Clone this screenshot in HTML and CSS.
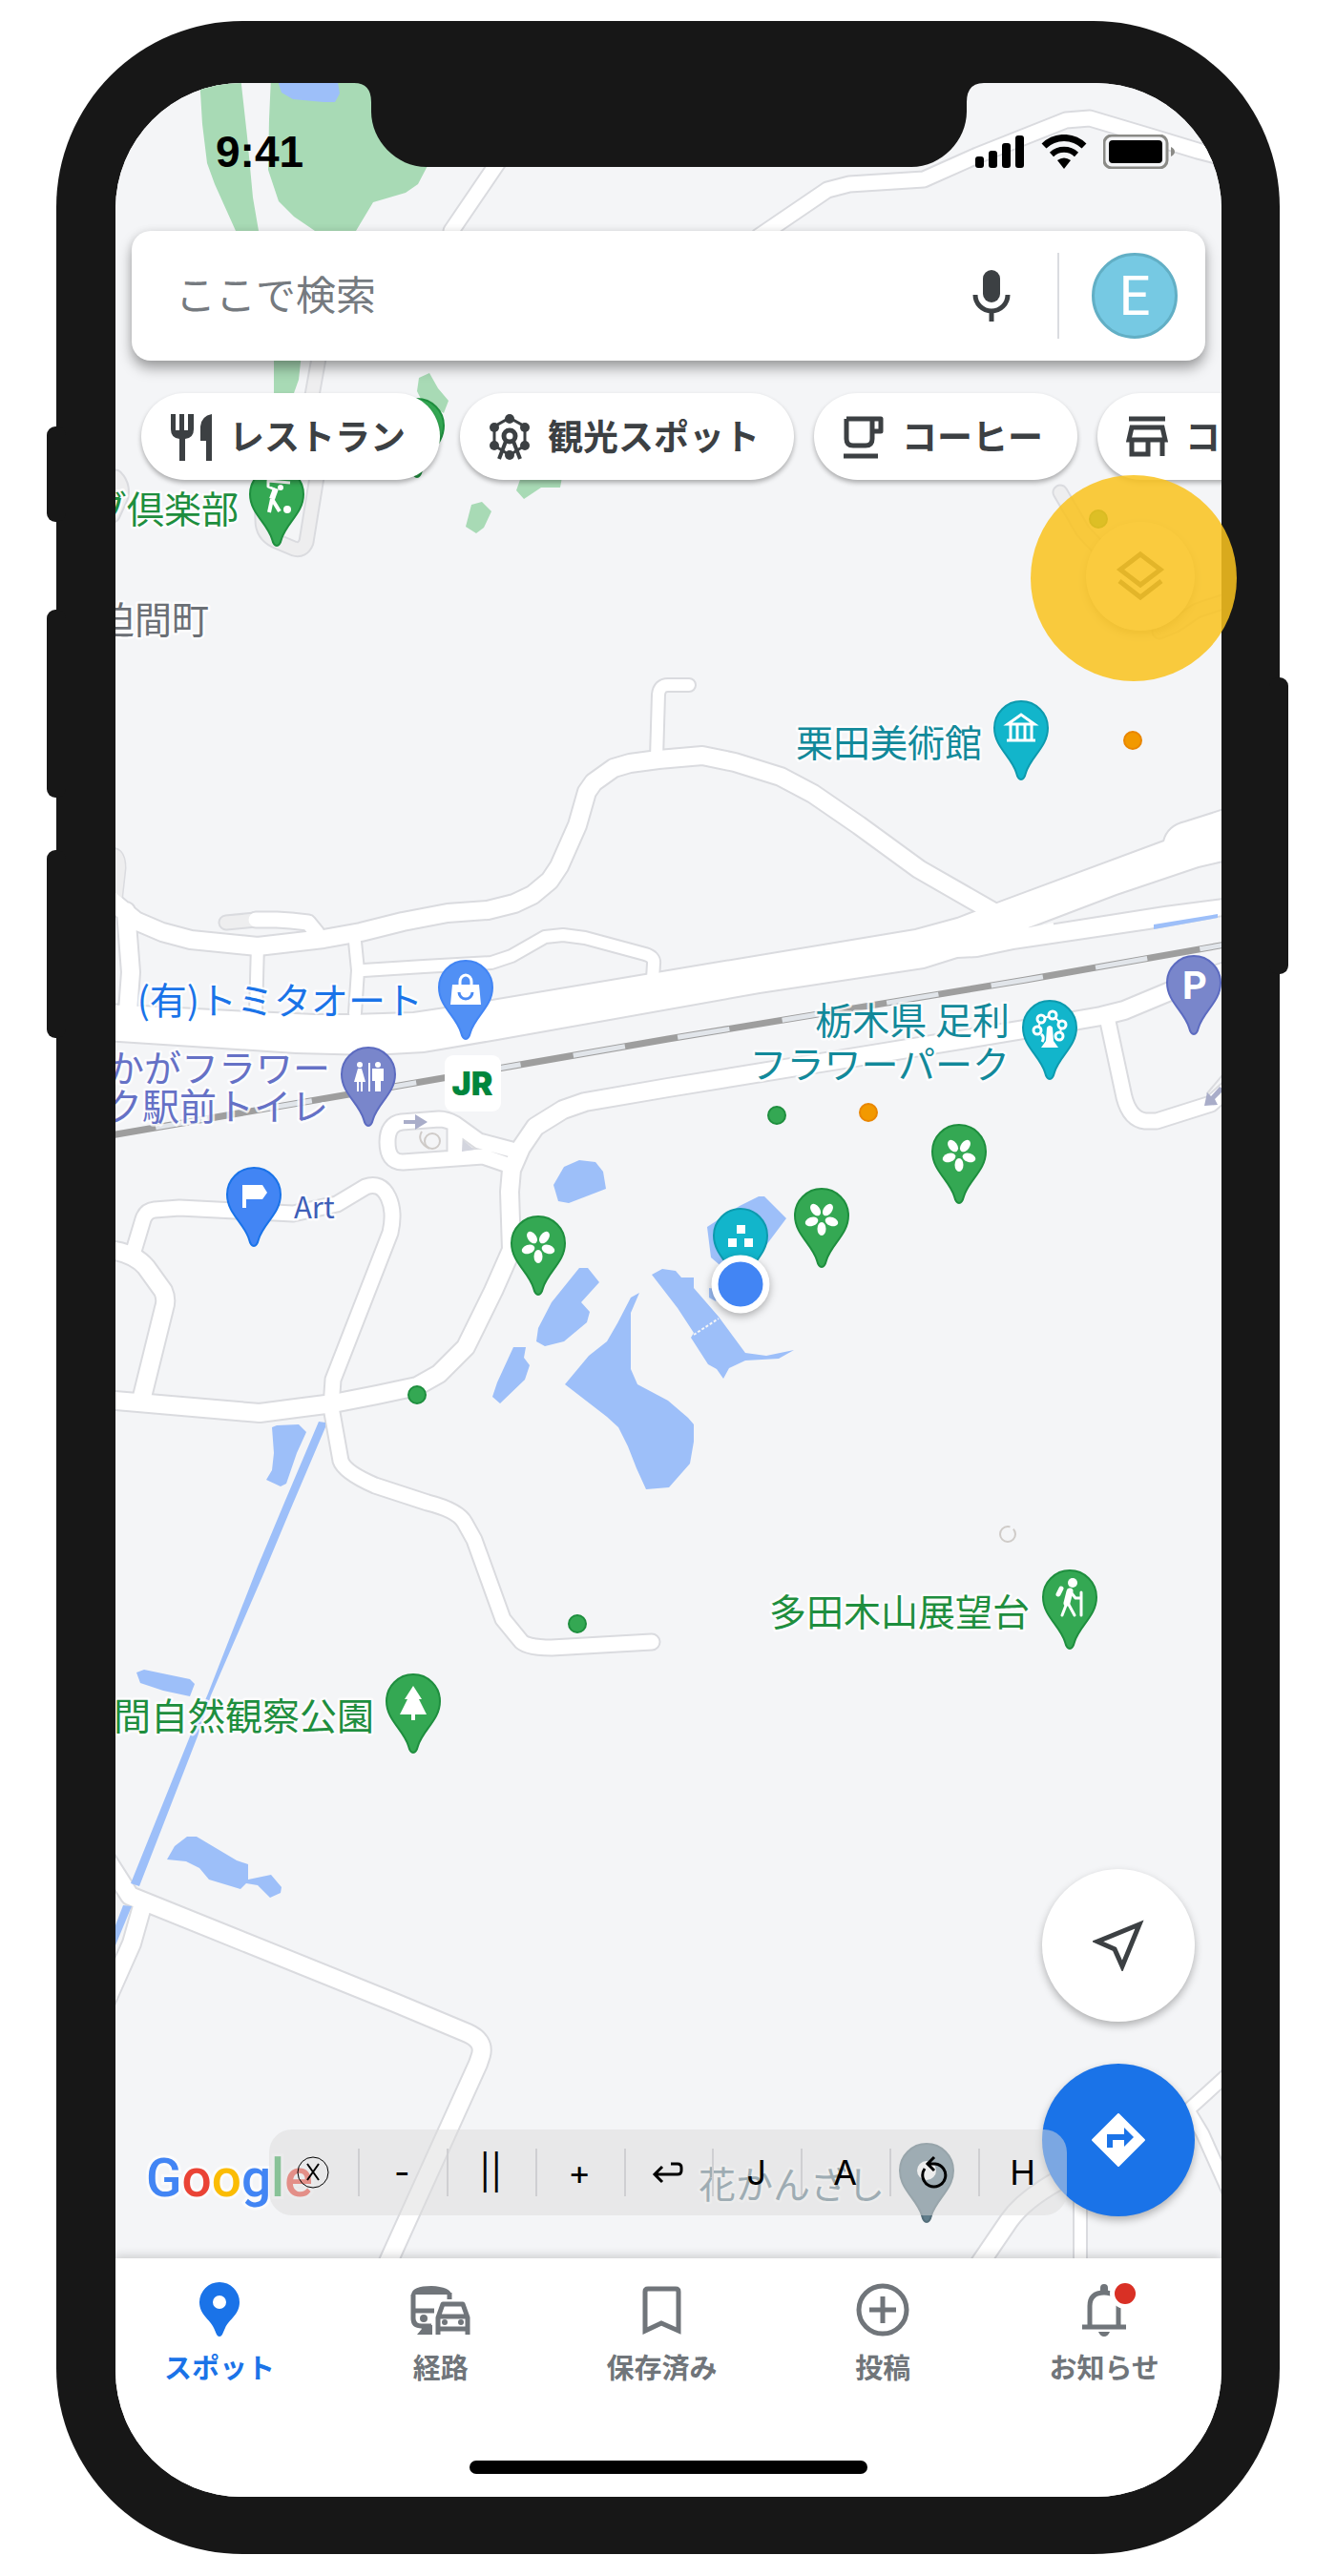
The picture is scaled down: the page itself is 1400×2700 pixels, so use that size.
FILE: index.html
```html
<!DOCTYPE html>
<html lang="ja">
<head>
<meta charset="utf-8">
<meta name="viewport" content="width=device-width, initial-scale=1">
<title>マップ</title>
<link rel="stylesheet" href="styles.css">
</head>
<body>
<div class="phone">
  <span class="side-key key-mute"></span>
  <span class="side-key key-up"></span>
  <span class="side-key key-down"></span>
  <span class="side-key key-power"></span>

  <div class="screen">
    <main class="map-area">
      <svg class="map" viewBox="121 87 1159 2280" role="img" aria-label="地図">
        <defs>
          <path id="pin" d="M0 0C-3 0-4-3-5-7C-10-24-28-34-28-54A28 28 0 1 1 28-54C28-34 10-24 5-7C4-3 3 0 0 0Z"/>
          <g id="flower" fill="#fff">
            <ellipse cx="0" cy="11" rx="4.5" ry="7"/>
            <ellipse cx="0" cy="11" rx="4.5" ry="7" transform="rotate(72)"/>
            <ellipse cx="0" cy="11" rx="4.5" ry="7" transform="rotate(144)"/>
            <ellipse cx="0" cy="11" rx="4.5" ry="7" transform="rotate(216)"/>
            <ellipse cx="0" cy="11" rx="4.5" ry="7" transform="rotate(288)"/>
          </g>
          <path id="trunk" d="M110 1053L242 1060 330 1064 368 1064 433 1062 480 1055 700 1018 959 975 1003 963 1050 945 1220 882Q1224 866 1242 862L1292 846V957L1204 973 1062 994 1024 1002 1003 1003 968 1014 796 1040 521 1089 444 1102 390 1105 310 1103 110 1090Z"/>
          <path id="alley" d="M335 370L326 420 332 500 321 568Q317 578 308 575L289 567Q275 560 275 545L274 520M1111 516L1135 557 1151 574M1215 662L1232 655 1254 640 1290 628M121 500Q129 508 127 520L118 540M237 967L268 964"/>
          <path id="r12" d="M688 795L690 728Q691 718 700 718H722M268 1062L270 990M372 987L375 1017 372 1062M381 1017L444 1013 515 1009 536 1002 571 982 590 980 613 983 676 1000Q686 1003 685 1010L684 1026M1132 2375V2300M1290 2171L1247 2210M1248 2216L1260 2236 1290 2303"/>
          <path id="r14" d="M795 248L867 199 890 193 968 188 1024 163 1117 126 1142 124 1209 144 1255 158 1290 167M522 170L473 242M268 964H290L305 965 323 967 332 978M540 1206L502 1196 477 1178Q468 1173 460 1173L421 1176Q406 1178 406 1197Q406 1218 422 1218L506 1212 538 1223M477 1180V1210M138 1318L150 1278Q153 1269 162 1268L188 1266 307 1272 353 1262 383 1244Q399 1238 407 1255Q414 1270 409 1292L349 1446 347 1475 357 1531Q361 1543 393 1557L448 1575Q480 1583 487 1596L497 1614 527 1697 545 1719Q550 1727 578 1727L683 1721M1160 1066L1178 1150Q1184 1173 1200 1175H1212L1269 1157 1290 1138"/>
          <path id="r17" d="M112 940L142 965 170 977 200 985 270 992 339 984 378 977 422 966 469 957 511 954 539 947 558 938 576 923 586 908 605 865 615 830 622 820 643 805 660 800 690 796 736 792 770 799 818 814 852 832 900 865 963 911 1045 958M132 955L137 1019 134 1060M1290 1016L1226 1039 1178 1059 1154 1065 1067 1080 878 1111 700 1140 613 1155 590 1163 561 1181 546 1203 536 1226 534 1249 536 1310 517 1353 488 1412 460 1440 437 1453 395 1462 349 1471 310 1476 272 1481 110 1467M110 1311H121Q142 1315 153 1328L171 1353Q175 1362 172 1371L148 1468M106 1940L136 1987 416 2100 490 2131Q508 2139 504 2154L501 2163 405 2375M149 1998L138 2037 110 2100M1025 2375L1057 2328Q1072 2306 1110 2285"/>
        </defs>

        <rect x="100" y="60" width="1200" height="2330" fill="#f4f5f7"/>

        <!-- woods -->
        <g fill="#a8dab5">
          <path d="M209 80H252L259 143 265 207 271 242H247L225 193 217 171 212 130Z"/>
          <path d="M284 80L282 125 281 178 292 211 308 227 330 242H373L391 212 425 202 438 193 450 170 420 80Z"/>
          <path d="M287 370H316L313 398 308 412H287Z"/>
          <path d="M439 396L450 391 459 407 470 420 465 433 442 420 437 410Z"/>
          <path d="M546 500H589L587 511H567L549 523 541 514Z"/>
          <path d="M494 529L505 526 515 536 507 553 499 559 488 552Z"/>
        </g>

        <!-- road edges -->
        <g fill="none" stroke="#dadbdf" stroke-linecap="round" stroke-linejoin="round">
          <path d="M112 890Q131 886 131 910L127 946 112 955Z" stroke-width="3"/>
          <use href="#alley" stroke-width="17"/>
          <use href="#r12" stroke-width="16"/>
          <use href="#r14" stroke-width="19"/>
          <use href="#r17" stroke-width="22"/>
          <use href="#trunk" stroke-width="4"/>
          <path d="M1265 1146L1285 1122" stroke-width="2"/>
        </g>
        <!-- road surfaces -->
        <g fill="none" stroke="#fff" stroke-linecap="round" stroke-linejoin="round">
          <path d="M112 890Q131 886 131 910L127 946 112 955Z" fill="#eeeeef" stroke="none"/>
          <use href="#alley" stroke="#eeeeef" stroke-width="13"/>
          <use href="#r12" stroke-width="12"/>
          <use href="#r14" stroke-width="15"/>
          <use href="#r17" stroke-width="18"/>
          <use href="#trunk" fill="#fff" stroke="none"/>
        </g>
        <path d="M1078 973L1170 938 1256 909 1290 901V941L1220 950 1106 968Z" fill="#f4f5f7" stroke="#dadbdf" stroke-width="2"/>
        <path d="M1070 976L1104 969" stroke="#fff" stroke-width="4"/>

        <!-- railway -->
        <path d="M110 1191L418 1138 700 1089 1075 1027 1290 989" fill="none" stroke="#9e9e9e" stroke-width="7"/>
        <path d="M110 1191L418 1138 700 1089 1075 1027 1290 989" fill="none" stroke="#e1e5ea" stroke-width="5" stroke-dasharray="55 56" stroke-dashoffset="-54"/>

        <!-- water -->
        <g fill="#9dbff9">
          <path d="M292 80L292 88 295 97 307 104 339 107H351L356 98 353 80Z"/>
          <path d="M334 1490L341 1491V1496L304 1583 276 1650 221 1777 207 1820 146 1977 137 1974 199 1820 218 1775 270 1642 298 1575Z"/>
          <path d="M129 1997L138 1998 121 2039V2018Z"/>
          <path d="M285 1496L290 1494 313 1493 321 1501 311 1523 300 1555 294 1558 279 1551 285 1541 287 1523Z"/>
          <path d="M143 1753L151 1750 199 1760 204 1765 199 1778 171 1772 147 1764Z"/>
          <path d="M175 1949L183 1935 196 1925H206L248 1950 260 1954V1970L284 1965 295 1978 294 1984 283 1989 270 1976 258 1974 252 1980 219 1970 209 1958 195 1951Z"/>
          <path d="M580 1242L591 1223 607 1216 624 1218 632 1228 635 1246 596 1261 585 1259Z"/>
          <path d="M607 1329H616L628 1344 609 1365 618 1375 615 1386 591 1406 571 1411 562 1406 564 1392 578 1365Z"/>
          <path d="M538 1412H551L549 1423 555 1431 550 1446 524 1471 516 1464 521 1449Z"/>
          <path d="M670 1355L661 1376V1435L668 1451 700 1468 721 1486 727 1493V1511L723 1534 701 1559 677 1561 667 1539 658 1516 648 1496 636 1485 592 1451 617 1421 636 1406 647 1387 661 1360Z"/>
          <path d="M683 1336L694 1330 708 1332 714 1339H727V1350L753 1380 781 1418 803 1421 832 1415 816 1424 781 1426 764 1434 758 1445 751 1435 742 1430 724 1402 727 1397 710 1371Z"/>
          <path d="M741 1286L775 1264 795 1254H801L824 1277 791 1321 759 1330 745 1318ZM743 1350L756 1352 750 1364 743 1360Z"/>
          <path d="M1209 969L1276 958V962L1209 974Z"/>
        </g>
        <path d="M727 1399L753 1382" stroke="#f4f5f7" stroke-width="2" stroke-dasharray="3 2"/>

        <!-- ground details -->
        <g fill="none" stroke="#cfcbc8" stroke-width="2">
          <circle cx="453" cy="1196" r="8"/>
          <path d="M442 1186Q436 1196 450 1204"/>
          <circle cx="1056" cy="1608" r="8" stroke-dasharray="40 4"/>
        </g>
        <g fill="#a9adc9">
          <path d="M423 1174H435V1168L448 1176 435 1184V1178H423Z"/>
          <path d="M485 1195L497 1205 484 1207Z" fill="#d3d5de"/>
          <path d="M1278 1139L1283 1142 1273 1152 1276 1158 1262 1159 1265 1145 1269 1149Z"/>
        </g>

        <!-- small places -->
        <g stroke-width="2">
          <g fill="#34a853" stroke="#1e8e3e">
            <circle cx="1151" cy="544" r="9"/><circle cx="814" cy="1169" r="9"/><circle cx="437" cy="1462" r="9"/><circle cx="605" cy="1702" r="9"/>
          </g>
          <g fill="#f29900" stroke="#e98600">
            <circle cx="1187" cy="776" r="9"/><circle cx="910" cy="1166" r="9"/>
          </g>
        </g>

        <!-- pins -->
        <g stroke-width="2">
          <g transform="translate(437 500)"><use href="#pin" fill="#34a853" stroke="#1e8e3e"/></g>
          <g transform="translate(290 572)">
            <use href="#pin" fill="#34a853" stroke="#1e8e3e"/>
            <g fill="none" stroke="#fff" stroke-width="3" stroke-linejoin="round">
              <path d="M14-66L-9-68V-62L0-58"/>
              <path d="M-1-60L-5-49" stroke-width="6"/>
              <path d="M-5-49L3-36M-5-49L-8-35" stroke-width="4"/>
            </g>
            <circle cx="4" cy="-61" r="3" fill="#fff"/><circle cx="11" cy="-38" r="4" fill="#fff"/>
          </g>
          <g transform="translate(1070 817)">
            <use href="#pin" fill="#12b5cb" stroke="#0d9aae"/>
            <path d="M-14-58L0-68 14-58ZM-15-41H15M-11-57V-42M-4-57V-42M4-57V-42M11-57V-42" fill="none" stroke="#fff" stroke-width="3"/>
          </g>
          <g transform="translate(488 1089)">
            <use href="#pin" fill="#5190f5" stroke="#4285f4"/>
            <path d="M-14-57H14L16-36H-16Z" fill="#fff"/>
            <path d="M-6-56V-60A6 7 0 0 1 6-60V-56" fill="none" stroke="#fff" stroke-width="3"/>
            <path d="M-7-49A7 7 0 0 0 7-49" fill="none" stroke="#4a8af4" stroke-width="3"/>
          </g>
          <g transform="translate(386 1180)">
            <use href="#pin" fill="#7986cb" stroke="#5c6bc0"/>
            <g fill="#fff">
              <circle cx="-9" cy="-64" r="3"/><path d="M-11-60H-7L-3-46H-6V-36H-8V-46H-10V-36H-12V-46H-15Z"/>
              <circle cx="10" cy="-64" r="3"/><path d="M4-60H16V-47H13V-36H7V-47H4Z"/>
              <path d="M0-66H2V-36H0Z"/>
            </g>
          </g>
          <g transform="translate(266 1306)">
            <use href="#pin" fill="#4285f4" stroke="#1a73e8"/>
            <path d="M-12-64H9L14-56 9-49H-8V-40H-12Z" fill="#fff"/>
          </g>
          <g transform="translate(564 1357)"><use href="#pin" fill="#34a853" stroke="#1e8e3e"/><use href="#flower" y="-51"/></g>
          <g transform="translate(861 1328)"><use href="#pin" fill="#34a853" stroke="#1e8e3e"/><use href="#flower" y="-51"/></g>
          <g transform="translate(1005 1261)"><use href="#pin" fill="#34a853" stroke="#1e8e3e"/><use href="#flower" y="-51"/></g>
          <g transform="translate(1100 1131)">
            <use href="#pin" fill="#12b5cb" stroke="#0d9aae"/>
            <g fill="none" stroke="#fff" stroke-width="3">
              <path d="M-13-51L-9-63 3-67 13-57 10-45" stroke-width="2"/>
              <g fill="#12b5cb"><circle cx="-13" cy="-51" r="4"/><circle cx="-9" cy="-63" r="4"/><circle cx="3" cy="-67" r="4"/><circle cx="13" cy="-57" r="4"/><circle cx="10" cy="-45" r="4"/></g>
              <path d="M-9-47Q-5-44-8-39"/>
            </g>
            <path d="M-3-54Q0-58 3-54L4-40 9-33H-9L-4-40Z" fill="#fff"/>
          </g>
          <g transform="translate(1251 1084)">
            <use href="#pin" fill="#7986cb" stroke="#5c6bc0"/>
            <text class="pin-letter" x="1" y="-37" text-anchor="middle">P</text>
          </g>
          <g transform="translate(776 1349)">
            <use href="#pin" fill="#12b5cb" stroke="#0d9aae"/>
            <path d="M-4-65H5V-56H-4ZM-13-51H-4V-42H-13ZM4-51H13V-42H4Z" fill="#fff"/>
          </g>
          <g transform="translate(1121 1728)">
            <use href="#pin" fill="#34a853" stroke="#1e8e3e"/>
            <circle cx="3" cy="-69" r="5" fill="#fff"/>
            <g fill="none" stroke="#fff" stroke-linecap="round" stroke-linejoin="round">
              <path d="M-9-63L-12-57" stroke-width="5"/>
              <path d="M0-60L-3-48" stroke-width="7"/>
              <path d="M-3-48L-8-35M-2-48L5-35M2-58L6-53H11M12-59V-35" stroke-width="3"/>
            </g>
          </g>
          <g transform="translate(433 1837)">
            <use href="#pin" fill="#34a853" stroke="#1e8e3e"/>
            <path d="M0-70L9-56H6L14-40H2V-34H-2V-40H-14L-6-56H-9Z" fill="#fff"/>
          </g>
          <g transform="translate(971 2329)">
            <use href="#pin" fill="#607d8b" stroke="#546e7a"/>
            <circle cx="0" cy="-54" r="10" fill="#fff"/>
          </g>
        </g>

        <!-- station -->
        <rect x="466" y="1106" width="59" height="59" rx="9" fill="#fff"/>
        <text class="station" x="495" y="1148" text-anchor="middle">JR</text>

        <!-- current position -->
        <circle class="here" cx="776" cy="1346" r="27"/>

        <!-- place names -->
        <g class="place">
          <text x="250" y="548" text-anchor="end" fill="#1e8e3e">ラブ倶楽部</text>
          <text x="219" y="664" text-anchor="end" fill="#6b6f75">迫間町</text>
          <text x="1029" y="793" text-anchor="end" fill="#12899a">栗田美術館</text>
          <text x="443" y="1063" text-anchor="end" fill="#1a73e8">(有)トミタオート</text>
          <text x="346" y="1134" text-anchor="end" fill="#6571c6">あしかがフラワー</text>
          <text x="344" y="1174" text-anchor="end" fill="#6571c6">パーク駅前トイレ</text>
          <text x="1058" y="1084" text-anchor="end" fill="#12899a">栃木県 足利</text>
          <text x="1058" y="1130" text-anchor="end" fill="#12899a">フラワーパーク</text>
          <text class="place-small" x="308" y="1277" fill="#3f5fb8">Art</text>
          <text x="1079" y="1704" text-anchor="end" fill="#1e8e3e">多田木山展望台</text>
          <text x="392" y="1813" text-anchor="end" fill="#1e8e3e">迫間自然観察公園</text>
          <text x="927" y="2304" text-anchor="end" fill="#607d8b">花かんざし</text>
        </g>

        <text class="brand" x="153" y="2302"><tspan fill="#4285f4">G</tspan><tspan fill="#ea4335">o</tspan><tspan fill="#fbbc04">o</tspan><tspan fill="#4285f4">g</tspan><tspan fill="#34a853">l</tspan><tspan fill="#ea4335">e</tspan></text>
      </svg>

      <div class="overlay">
        <div class="status">
          <time class="clock">9:41</time>
          <div class="status-icons">
            <svg width="52" height="36" viewBox="0 0 52 36" aria-label="電波">
              <rect x="0" y="23" width="9" height="12" rx="3"/><rect x="14" y="17" width="9" height="18" rx="3"/><rect x="28" y="9" width="9" height="26" rx="3"/><rect x="42" y="1" width="9" height="34" rx="3"/>
            </svg>
            <svg width="48" height="36" viewBox="0 0 48 36" aria-label="Wi-Fi">
              <path d="M3 12A30 30 0 0 1 45 12" fill="none" stroke="#000" stroke-width="7"/>
              <path d="M11 21A19 19 0 0 1 37 21" fill="none" stroke="#000" stroke-width="6"/>
              <path d="M17 27Q24 22 31 27L24 36Z"/>
            </svg>
            <svg width="76" height="36" viewBox="0 0 76 36" aria-label="電池">
              <rect x="1" y="1" width="66" height="34" rx="8" fill="#f4f5f7" stroke="#8a8a86" stroke-width="3"/>
              <rect x="6" y="6" width="56" height="24" rx="4"/>
              <path d="M71 13Q75 15 75 18Q75 21 71 23Z" fill="#8a8a86"/>
            </svg>
          </div>
        </div>

        <form class="search">
          <input class="search-input" type="search" placeholder="ここで検索" aria-label="ここで検索">
          <button class="icon-button mic" type="button" aria-label="音声検索">
            <svg width="40" height="56" viewBox="0 0 40 56">
              <rect x="11" y="1" width="18" height="34" rx="9" fill="#3c4043"/>
              <path d="M3 27A17 17 0 0 0 37 27M20 43V55" fill="none" stroke="#3c4043" stroke-width="5"/>
            </svg>
          </button>
          <button class="avatar" type="button" aria-label="アカウント">E</button>
        </form>

        <div class="chips">
          <button class="chip" type="button">
            <svg width="44" height="50" viewBox="0 0 44 50">
              <path d="M1 1H6V18H10V1H15V18H19V1H25V17Q25 26 16 27V50H10V27Q1 26 1 17ZM44 1V50H38V29H32V14Q33 3 44 1Z" fill="#3c4043"/>
            </svg><span>レストラン</span></button>
          <button class="chip" type="button">
            <svg width="44" height="50" viewBox="0 0 44 50">
              <path d="M22 5L38 14V34L22 44 6 34V14Z" fill="none" stroke="#3c4043" stroke-width="3"/>
              <g fill="#3c4043"><circle cx="22" cy="6" r="5"/><circle cx="38" cy="15" r="5"/><circle cx="38" cy="34" r="5"/><circle cx="22" cy="44" r="5"/><circle cx="6" cy="34" r="5"/><circle cx="6" cy="15" r="5"/></g>
              <path d="M19 27L11 48M25 27L33 48" fill="none" stroke="#3c4043" stroke-width="4"/>
              <circle cx="22" cy="24" r="6" fill="#fff" stroke="#3c4043" stroke-width="5"/>
            </svg><span>観光スポット</span></button>
          <button class="chip" type="button">
            <svg width="44" height="50" viewBox="0 0 44 50">
              <path d="M4 6H40V19H31M4 6V27Q4 34 11 34H24Q31 34 31 27V6M1 45H37" fill="none" stroke="#3c4043" stroke-width="5" stroke-linejoin="round"/>
            </svg><span>コーヒー</span></button>
          <button class="chip" type="button">
            <svg width="44" height="50" viewBox="0 0 44 50">
              <path d="M3 6H41M6 15H38L41 28H3ZM6 28V43H23V28M38 28V45" fill="none" stroke="#3c4043" stroke-width="5"/>
            </svg><span>コンビニ</span></button>
        </div>

        <button class="round layers" type="button" aria-label="地図の種類">
          <svg width="52" height="56" viewBox="0 0 52 56">
            <path d="M26 5L47 21 26 37 5 21ZM4 33L26 50 48 33" fill="none" stroke="#5f6368" stroke-width="5"/>
          </svg>
        </button>

        <div class="fabs">
          <button class="round locate" type="button" aria-label="現在地">
            <svg width="54" height="54" viewBox="0 0 54 54">
              <path d="M49 5L5 23 23 31 31 49Z" fill="none" stroke="#3c4043" stroke-width="5"/>
            </svg>
          </button>
          <button class="round directions" type="button" aria-label="ルート">
            <svg width="60" height="60" viewBox="0 0 60 60">
              <path d="M30 3L57 30 30 57 3 30Z" fill="#fff" stroke="#fff" stroke-width="2" stroke-linejoin="round"/>
              <path d="M21 38V27H38" fill="none" stroke="#1a73e8" stroke-width="6"/>
              <path d="M36 17L46 27 36 37Z" fill="#1a73e8"/>
            </svg>
          </button>
        </div>
      </div>

      <div class="toolbar" role="toolbar" aria-label="操作">
        <button type="button" aria-label="閉じる">
          <svg width="36" height="36" viewBox="0 0 36 36"><circle cx="18" cy="18" r="16" fill="none" stroke="#000" stroke-width="1"/><path d="M12 9L24 26M24 9L12 26" stroke="#000" stroke-width="2"/></svg>
        </button>
        <button type="button">-</button>
        <button type="button">||</button>
        <button type="button">+</button>
        <button type="button" aria-label="戻る">
          <svg width="34" height="28" viewBox="0 0 34 28"><path d="M11 8L3 16 11 24M3 16H27Q31 16 31 12V9Q31 5 27 5H20" fill="none" stroke="#000" stroke-width="3"/></svg>
        </button>
        <button type="button">J</button>
        <button type="button">A</button>
        <button type="button" aria-label="やり直し">
          <svg width="32" height="36" viewBox="0 0 32 36"><path d="M6 14A12 12 0 1 0 17 9H8M16 2L9 9 16 16" fill="none" stroke="#000" stroke-width="3"/></svg>
        </button>
        <button type="button">H</button>
      </div>
    </main>

    <footer class="bottom">
      <nav class="tabs">
        <a class="tab tab-active" href="#spot">
          <svg width="60" height="60" viewBox="0 0 60 60"><path d="M30 58C27 58 26 53 24 49C20 40 9 35 9 22A21 21 0 1 1 51 22C51 35 40 40 36 49C34 53 33 58 30 58ZM30 15A7 7 0 1 0 30 29A7 7 0 1 0 30 15Z" fill="currentColor" fill-rule="evenodd"/></svg>
          <span>スポット</span>
        </a>
        <a class="tab" href="#routes">
          <svg width="64" height="60" viewBox="0 0 64 60">
            <g fill="none" stroke="currentColor" stroke-width="4">
              <path d="M41 19V12M3 14V39Q3 47 12 47H22" stroke-width="5"/><path d="M4 31H25" stroke-width="5"/>
              <path d="M29 56V38L34 24H55L60 38V56M29 37H60M29 50H60" stroke-width="5" stroke-linejoin="round"/>
            </g>
            <path d="M1 14Q2 5 22 5Q42 6 43 14ZM10 46H23V56H7L12 50Z" fill="currentColor"/>
            <g fill="currentColor"><circle cx="14" cy="39" r="4"/><circle cx="36" cy="43" r="3"/><circle cx="53" cy="43" r="3"/></g>
          </svg>
          <span>経路</span>
        </a>
        <a class="tab" href="#saved">
          <svg width="60" height="60" viewBox="0 0 60 60"><path d="M13 52V11Q13 8 16 8H45Q48 8 48 11V52L30 44Z" fill="none" stroke="currentColor" stroke-width="5"/></svg>
          <span>保存済み</span>
        </a>
        <a class="tab" href="#contribute">
          <svg width="60" height="60" viewBox="0 0 60 60"><circle cx="30" cy="30" r="25" fill="none" stroke="currentColor" stroke-width="5"/><path d="M30 16V44M16 30H44" stroke="currentColor" stroke-width="5"/></svg>
          <span>投稿</span>
        </a>
        <a class="tab" href="#news">
          <svg width="60" height="60" viewBox="0 0 60 60" overflow="visible">
            <path d="M7 48H53M15 48V26Q15 12 30 12T45 26V48" fill="none" stroke="currentColor" stroke-width="5"/>
            <path d="M26 12V7A4 4 0 0 1 34 7V12ZM24 53H36Q34 58 30 58T24 53Z" fill="currentColor"/>
            <circle cx="52" cy="13" r="16" fill="#fff"/><circle cx="52" cy="13" r="11" fill="#d93025"/>
          </svg>
          <span>お知らせ</span>
        </a>
      </nav>
      <div class="home-bar"></div>
    </footer>
  </div>

  <svg class="notch" width="660" height="90" viewBox="0 0 660 90">
    <path d="M0 0V2Q18 2 18 22V32C18 62 44 90 76 90H584C616 90 642 62 642 32V22Q642 2 660 2V0Z" fill="#171717"/>
  </svg>
  <span class="touch"></span>
</div>
</body>
</html>
```
FILE: styles.css
```css
* { box-sizing: border-box; }

body {
  margin: 0;
  padding: 22px 59px 23px;
  background: #fff;
  font-family: "Noto Sans CJK JP", sans-serif;
  color: #3c4043;
}

button {
  margin: 0;
  padding: 0;
  border: 0;
  background: none;
  font: inherit;
  color: inherit;
}

svg { display: block; flex: none; }

/* device */
.phone {
  position: relative;
  padding: 65px 61px 60px 62px;
  border-radius: 195px;
  background: #171717;
}

.side-key {
  position: absolute;
  width: 20px;
  border-radius: 9px;
  background: #171717;
}
.key-mute { left: -10px; top: 425px; height: 100px; }
.key-up { left: -10px; top: 617px; height: 197px; }
.key-down { left: -10px; top: 869px; height: 197px; }
.key-power { right: -9px; top: 688px; height: 311px; }

.notch {
  position: absolute;
  top: 63px;
  left: 50%;
  margin-left: -329px;
}

.touch {
  position: absolute;
  top: 476px;
  right: 45px;
  width: 216px;
  height: 216px;
  border-radius: 50%;
  background: rgba(249, 194, 30, .86);
  pointer-events: none;
}

.screen {
  overflow: hidden;
  border-radius: 132px;
  background: #fff;
}

/* map */
.map-area { position: relative; }
.map { width: 100%; height: auto; }

.place {
  font-size: 39px;
  paint-order: stroke;
  stroke: #fff;
  stroke-opacity: .8;
  stroke-width: 5px;
  stroke-linejoin: round;
}
.place-small { font-size: 31px; }

.brand {
  font-family: Roboto, sans-serif;
  font-size: 55px;
  font-weight: 500;
  paint-order: stroke;
  stroke: #fff;
  stroke-opacity: .6;
  stroke-width: 6px;
}

.pin-letter {
  font-family: Roboto, sans-serif;
  font-size: 40px;
  font-weight: 700;
  fill: #fff;
  stroke: none;
}

.station {
  font-family: Inter, sans-serif;
  font-size: 34px;
  font-weight: 900;
  fill: #00863d;
}

.here {
  fill: #4285f4;
  stroke: #fff;
  stroke-width: 7px;
  filter: drop-shadow(0 3px 4px rgba(0, 0, 0, .3));
}

.overlay {
  position: absolute;
  inset: 0;
  display: flex;
  flex-direction: column;
}

/* status bar */
.status {
  display: flex;
  align-items: center;
  justify-content: space-between;
  height: 155px;
  padding: 0 48px 12px 105px;
}
.clock {
  font-family: "Liberation Sans", sans-serif;
  font-size: 46px;
  font-weight: 700;
  line-height: 52px;
  color: #000;
}
.status-icons {
  display: flex;
  gap: 17px;
}

/* search */
.search {
  display: flex;
  align-items: center;
  height: 136px;
  margin: 0 17px;
  padding: 0 29px 0 46px;
  border-radius: 20px;
  background: #fff;
  box-shadow: 0 8px 14px rgba(0, 0, 0, .35), 0 0 8px rgba(0, 0, 0, .08);
}
.search-input {
  flex: 1;
  min-width: 0;
  padding: 0 0 6px;
  border: 0;
  outline: 0;
  background: none;
  font: inherit;
  font-size: 42px;
  line-height: 60px;
  color: #3c4043;
}
.search-input::placeholder { color: #757a7f; opacity: 1; }
.mic {
  display: flex;
  align-items: center;
  height: 90px;
  margin-right: 34px;
  padding-right: 49px;
  border-right: 2px solid #dadce0;
}
.avatar {
  width: 90px;
  height: 90px;
  border: 3px solid #62afc5;
  border-radius: 50%;
  background: #76c9e3;
  font-family: Roboto, sans-serif;
  font-size: 58px;
  line-height: 84px;
  text-align: center;
  color: #fff;
}

/* category chips */
.chips {
  display: flex;
  gap: 21px;
  margin-top: 34px;
  padding-left: 27px;
}
.chip {
  display: flex;
  flex: none;
  align-items: center;
  gap: 18px;
  height: 91px;
  padding: 0 36px 0 30px;
  border-radius: 46px;
  background: #fff;
  box-shadow: 0 3px 5px rgba(0, 0, 0, .3);
  font-size: 37px;
  font-weight: 700;
  line-height: 52px;
  white-space: nowrap;
}
.chip span { padding-bottom: 4px; }

/* round buttons */
.round {
  display: flex;
  align-items: center;
  justify-content: center;
  border-radius: 50%;
  background: #fff;
  box-shadow: 0 4px 8px rgba(0, 0, 0, .28);
}
.layers {
  align-self: flex-end;
  width: 114px;
  height: 114px;
  margin: 44px 28px 0 0;
}
.fabs {
  display: flex;
  flex-direction: column;
  align-items: flex-end;
  gap: 44px;
  margin-top: auto;
  padding: 0 28px 44px 0;
}
.locate, .directions { width: 160px; height: 160px; }
.directions { background: #1a73e8; }

/* floating toolbar */
.toolbar {
  position: absolute;
  right: 162px;
  bottom: 45px;
  left: 161px;
  display: grid;
  grid-template-columns: repeat(9, 1fr);
  align-items: center;
  height: 90px;
  border-radius: 24px;
  background: rgba(219, 219, 220, .5);
}
.toolbar button {
  display: flex;
  align-items: center;
  justify-content: center;
  height: 50px;
  box-shadow: 2px 0 0 #cfcfd2;
  font-family: Inter, sans-serif;
  font-size: 36px;
  font-weight: 400;
  line-height: 50px;
  color: #000;
}
.toolbar button:last-child { box-shadow: none; }

/* bottom tabs */
.bottom {
  position: relative;
  padding: 24px 0;
  background: #fff;
  box-shadow: 0 -2px 10px rgba(0, 0, 0, .18);
}
.tabs {
  display: grid;
  grid-template-columns: repeat(5, 1fr);
  margin: 0 7px 0 -7px;
}
.tab {
  display: flex;
  flex-direction: column;
  align-items: center;
  gap: 9px;
  font-size: 29px;
  font-weight: 700;
  line-height: 40px;
  text-decoration: none;
  color: #70757a;
}
.tab-active { color: #1a73e8; }

.home-bar {
  width: 36%;
  height: 14px;
  margin: 79px auto 0;
  border-radius: 7px;
  background: #000;
}
```
